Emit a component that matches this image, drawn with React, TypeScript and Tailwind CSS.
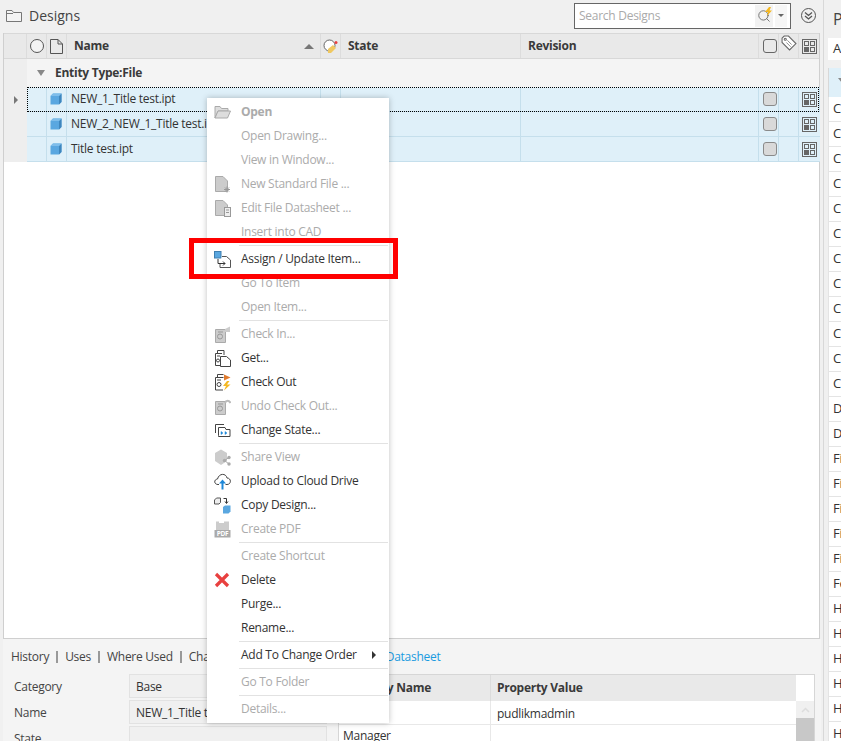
import React from 'react';
import { Search } from 'lucide-react';

const FONT = '"Open Sans", "Noto Sans", sans-serif';
const COLS = 'grid-cols-[23px_20px_20px_254px_20px_180px_238px_20px_20px_21px]';

const Cube = () => (
  <svg width="12" height="12" viewBox="0 0 12 12">
    <path d="M0.5 3 L3 0.5 H11.5 V9 L9 11.5 H0.5 Z" fill="#5aa7e0" />
    <path d="M9 3 L11.5 0.5 V9 L9 11.5 Z" fill="#3f86bd" />
    <path d="M0.5 3 L3 0.5 H11.5 L9 3 Z" fill="#7fbdea" />
  </svg>
);

const GridIcon = () => (
  <svg width="15" height="15" viewBox="0 0 15 15" fill="none">
    <rect x="0.5" y="0.5" width="14" height="14" stroke="#666" />
    <rect x="2.5" y="2.5" width="4" height="4" stroke="#666" />
    <rect x="8.5" y="2.5" width="4" height="4" stroke="#666" />
    <rect x="2" y="8" width="5" height="5" fill="#666" />
    <rect x="8.5" y="8.5" width="4" height="4" stroke="#666" />
  </svg>
);

const doc = 'M1.5 0.5 H9 L13.5 5 V15.5 H1.5 Z';

const icons: Record<string, React.ReactNode> = {
  open: (
    <g>
      <path d="M1 2.5 H6 L7.5 4.5 H14 V7 H4 L1 14 Z" fill="#ddd" stroke="#aaa" />
      <path d="M4 7 H16.5 L13.5 14 H1 Z" fill="#ddd" stroke="#aaa" />
    </g>
  ),
  newFile: (
    <g>
      <path d={doc} fill="#ccc" stroke="#aaa" />
      <path d="M13 10.5 V16.5 M10 13.5 H16 M11 11.5 L15 15.5 M15 11.5 L11 15.5" stroke="#999" />
    </g>
  ),
  edit: (
    <g>
      <path d={doc} fill="#ccc" stroke="#aaa" />
      <rect x="10.5" y="7.5" width="6" height="9" fill="#eee" stroke="#999" />
      <path d="M12 10 H15 M12 12.5 H15" stroke="#999" />
    </g>
  ),
  assign: (
    <g>
      <rect x="0.5" y="0.5" width="6.5" height="6.5" fill="#5aa7e0" stroke="#3f7fb0" />
      <path d="M8 5.5 H12.5 L16.5 9 V16.5 H6 V13" fill="#fff" stroke="#555" />
      <path d="M4 8 V12.5 H11 M9 10.5 L11 12.5 L9 14.5" fill="none" stroke="#333" />
    </g>
  ),
  checkIn: (
    <g>
      <path d="M1.5 3.5 H11.5 V16.5 H1.5 Z" fill="#ccc" stroke="#aaa" />
      <circle cx="6" cy="10.5" r="2.5" fill="none" stroke="#999" />
      <path d="M4 6 H9" stroke="#999" />
      <path d="M11 3 L16 0.5 V6 L11 6 Z" fill="#ccc" />
    </g>
  ),
  get: (
    <g fill="none" stroke="#444">
      <path d="M1.5 3.5 V15.5 H6 M1.5 3.5 H8 M3.5 3.5 V0.5 H10 V5" />
      <circle cx="4" cy="10.5" r="1.5" />
      <path d="M3 6 H6" />
      <path d="M6.5 6.5 H12.5 L16.5 10 V16.5 H6.5 Z" fill="#fff" />
    </g>
  ),
  checkOut: (
    <g>
      <g fill="none" stroke="#444">
        <path d="M1.5 3.5 V16 H9 M1.5 3.5 H9.5 M3.5 3.5 V0.5 H9.5" />
        <circle cx="5" cy="10.5" r="2" />
        <path d="M3 6 H7" />
      </g>
      <path d="M10 0.5 L16.5 3.5 L10 6.5 Z" fill="#e07b2e" />
      <path d="M13 7 L9 12 H12 L10 16.5 L16.5 10.5 H13 L15.5 7 Z" fill="#f5b821" />
    </g>
  ),
  undo: (
    <g>
      <path d="M1.5 3.5 H11.5 V16.5 H1.5 Z" fill="#ccc" stroke="#aaa" />
      <circle cx="6" cy="10.5" r="2.5" fill="none" stroke="#999" />
      <path d="M4 6 H9" stroke="#999" />
      <path d="M11 5 C12 2 15 2 16.5 5" fill="none" stroke="#bbb" strokeWidth="2" />
    </g>
  ),
  change: (
    <g fill="none" stroke="#444">
      <path d="M1.5 11 V2.5 H10" />
      <path d="M4.5 13.5 V5.5 H11 L12 7.5 H16 V14.5 H4.5 Z" />
      <path d="M7 9.5 L9 11 L7 12.5 Z M11 9.5 L13 11 L11 12.5 Z" fill="#1e88d8" stroke="#1e88d8" strokeWidth="0.5" />
    </g>
  ),
  share: (
    <g>
      <path d="M1 4 L7 0.5 L13 4 V12 L7 16 L1 12 Z" fill="#ccc" />
      <circle cx="10.5" cy="11.5" r="1.7" fill="#aaa" />
      <circle cx="15" cy="8.5" r="1.7" fill="#aaa" />
      <circle cx="15" cy="15" r="1.7" fill="#aaa" />
      <path d="M10.5 11.5 L15 8.5 M10.5 11.5 L15 15" stroke="#aaa" />
    </g>
  ),
  cloud: (
    <g>
      <path d="M5 11.5 H4 C0 11.5 -0.5 6.5 3.5 6 C5 0 12 0 13 5 C17.5 5 17.5 11.5 13 11.5 H11.5" fill="none" stroke="#444" />
      <path d="M8.5 16.5 V9" stroke="#1e88d8" strokeWidth="2" />
      <path d="M5 10.5 L8.5 6.5 L12 10.5 Z" fill="#1e88d8" />
    </g>
  ),
  copy: (
    <g>
      <path d="M0.5 3 L2.5 1 H6.5 V5.5 L5 7 H0.5 Z" fill="#eee" stroke="#555" />
      <path d="M9.5 1.5 H12.5 V6 M11 4.5 L12.5 6.5 L14 4.5" fill="none" stroke="#333" />
      <path d="M9 10 L11 8.5 H16.5 V14.5 L14.5 16.5 H9 Z" fill="#5aa7e0" />
    </g>
  ),
  pdf: (
    <g>
      <path d="M2 0.5 H5 V2 H10 V0.5 H15 V9 H2 Z" fill="#ccc" />
      <rect x="0.5" y="9" width="16" height="7.5" fill="#aaa" />
      <text x="8.5" y="15" textAnchor="middle" fontSize="6.5" fontWeight="700" fill="#fff" fontFamily={FONT}>PDF</text>
    </g>
  ),
  del: <path d="M2 2 L14 14 M14 2 L2 14" stroke="#e8403f" strokeWidth="3.2" />,
};

type Entry = { label?: string; icon?: string; on?: boolean; bold?: boolean; sub?: boolean };

const menu: Entry[] = [
  { label: 'Open', icon: 'open', bold: true },
  { label: 'Open Drawing...' },
  { label: 'View in Window...' },
  { label: 'New Standard File ...', icon: 'newFile' },
  { label: 'Edit File Datasheet ...', icon: 'edit' },
  { label: 'Insert into CAD' },
  {},
  { label: 'Assign / Update Item...', icon: 'assign', on: true },
  { label: 'Go To Item' },
  { label: 'Open Item...' },
  {},
  { label: 'Check In...', icon: 'checkIn' },
  { label: 'Get...', icon: 'get', on: true },
  { label: 'Check Out', icon: 'checkOut', on: true },
  { label: 'Undo Check Out...', icon: 'undo' },
  { label: 'Change State...', icon: 'change', on: true },
  {},
  { label: 'Share View', icon: 'share' },
  { label: 'Upload to Cloud Drive', icon: 'cloud', on: true },
  { label: 'Copy Design...', icon: 'copy', on: true },
  { label: 'Create PDF', icon: 'pdf' },
  {},
  { label: 'Create Shortcut' },
  { label: 'Delete', icon: 'del', on: true },
  { label: 'Purge...', on: true },
  { label: 'Rename...', on: true },
  {},
  { label: 'Add To Change Order', on: true, sub: true },
  {},
  { label: 'Go To Folder' },
  {},
  { label: 'Details...' },
];

const rows = ['NEW_1_Title test.ipt', 'NEW_2_NEW_1_Title test.ipt', 'Title test.ipt'];

const side = [
  ...Array(12).fill('C'),
  'D', 'D', 'Fi', 'Fi', 'Fi', 'Fi', 'Fi', 'Fe',
  ...Array(6).fill('H'),
];

const ContextMenu = () => (
  <div className="absolute left-[207px] top-[98px] w-[182px] bg-white py-[2px] shadow-[0_0_6px_rgba(0,0,0,0.25)]">
    {menu.map((m, i) =>
      m.label ? (
        <div
          key={i}
          className={`relative flex h-6 items-center ${m.on ? 'text-[#333]' : 'text-[#ababab]'} ${m.bold ? 'font-bold' : ''}`}
        >
          <span className="flex w-[34px] shrink-0 pl-[7px]">
            {m.icon && (
              <svg width="17" height="17" viewBox="0 0 17 17">
                {icons[m.icon]}
              </svg>
            )}
          </span>
          {m.label}
          {m.sub && <span className="absolute right-[13px] h-0 w-0 border-y-[4px] border-l-[4px] border-y-transparent border-l-[#333]" />}
        </div>
      ) : (
        <div key={i} className="ml-8 mr-px h-[3px] py-px">
          <div className="h-px bg-[#e2e2e2]" />
        </div>
      ),
    )}
  </div>
);

export default function App() {
  return (
    <div className="relative flex h-[741px] w-[841px] overflow-hidden bg-[#f0f0f0] text-xs tracking-[-0.27px] text-[#333]" style={{ fontFamily: FONT }}>
      {/* Designs pane */}
      <div className="flex w-[823px] shrink-0 flex-col pl-[3px]">
        <div className="flex h-[33px] shrink-0 items-center pb-[2px]">
          <svg width="16" height="14" viewBox="0 0 16 14" fill="none" className="ml-[3px]">
            <path d="M0.5 12.5 V1.5 H6 L7.5 3.5 H15.5 V12.5 Z M0.5 4.5 H7" stroke="#777" fill="#f4f4f4" />
          </svg>
          <span className="ml-[7px] text-sm tracking-normal text-[#444]">Designs</span>
          <div className="ml-auto mr-[3px] flex items-center gap-[5px]">
            <div className="flex h-[26px] w-[217px] items-center border border-[#666] bg-white pl-1 pr-[3px]">
              <span className="flex-1 text-[#aaa]">Search Designs</span>
              <span className="relative flex h-[22px] w-[18px] items-center justify-center bg-[#f2f2f2]">
                <Search size={14} strokeWidth={1.5} color="#666" />
                <svg width="9" height="9" viewBox="0 0 9 9" className="absolute right-0 top-[2px]">
                  <path d="M5 0 L1 5 H4 L3 9 L8 3.5 H5.5 L7 0 Z" fill="#f5b821" />
                </svg>
              </span>
              <span className="ml-[2px] flex h-[22px] w-[12px] items-center justify-center bg-[#f6f6f6]">
                <span className="h-0 w-0 border-x-[3px] border-t-[3px] border-x-transparent border-t-[#666]" />
              </span>
            </div>
            <svg width="15" height="15" viewBox="0 0 15 15" fill="none" stroke="#555" className="ml-[5px] mr-[4px]">
              <circle cx="7.5" cy="7.5" r="7" />
              <path d="M4 4.5 L7.5 7.5 L11 4.5 M4 8 L7.5 11 L11 8" strokeWidth="1.3" />
            </svg>
          </div>
        </div>

        <div className="w-[817px] flex-1 border-x border-b border-[#cfcfcf] bg-white">
          {/* header */}
          <div className={`grid h-[26px] ${COLS} border-y border-[#d8d8d8] bg-[#e9e9e9] font-bold text-[#3a3a3a]`}>
            <div className="border-r border-[#dcdcdc]" />
            <div className="flex items-center justify-center border-r border-[#dcdcdc]">
              <span className="h-[14px] w-[14px] rounded-full border border-[#555] bg-[#f4f4f4]" />
            </div>
            <div className="flex items-center justify-center border-r border-[#dcdcdc]">
              <svg width="13" height="15" viewBox="0 0 13 15" fill="none" stroke="#555">
                <path d="M0.5 0.5 H8 L12.5 5 V14.5 H0.5 Z M8 0.5 V5 H12.5" />
              </svg>
            </div>
            <div className="flex items-center justify-between border-r border-[#dcdcdc] pl-[7px] pr-[6px]">
              Name
              <span className="h-0 w-0 border-x-[5px] border-b-[5px] border-x-transparent border-b-[#777]" />
            </div>
            <div className="flex items-center justify-center border-r border-[#dcdcdc]">
              <svg width="15" height="15" viewBox="0 0 15 15" fill="none">
                <circle cx="6.5" cy="6.5" r="5.5" stroke="#666" fill="#fff" />
                <path d="M5 10 L10 6 L13 9 L8 14 L5 14 Z" fill="#f0c860" />
                <circle cx="13" cy="3.5" r="1.5" fill="#e8403f" />
              </svg>
            </div>
            <div className="flex items-center border-r border-[#dcdcdc] pl-[7px]">State</div>
            <div className="flex items-center border-r border-[#dcdcdc] pl-[7px]">Revision</div>
            <div className="flex items-center border-r border-[#dcdcdc] pl-[4px]">
              <span className="h-[14px] w-[14px] rounded-[3px] border border-[#666]" />
            </div>
            <div className="flex items-start justify-center border-r border-[#dcdcdc] pt-px">
              <svg width="16" height="16" viewBox="0 0 15 15" fill="none" stroke="#666">
                <path d="M1 3 L3 1 H7 L14 8 L8 14 L1 7 Z" fill="#fff" />
                <circle cx="4" cy="4" r="1" />
                <path d="M6 5 L10 9 M5 7 L9 11" strokeWidth="0.7" />
              </svg>
            </div>
            <div className="flex items-center pl-[3px]">
              <GridIcon />
            </div>
          </div>
          {/* group row */}
          <div className="flex h-[28px] bg-[#f4f4f4] font-bold text-[#3a3a3a]">
            <div className="w-[23px] shrink-0 bg-[#eeeeee]" />
            <div className="flex items-center">
              <span className="ml-[10px] mr-[10px] h-0 w-0 border-x-[4px] border-t-[6px] border-x-transparent border-t-[#888]" />
              Entity Type:File
            </div>
          </div>
          {/* rows */}
          {rows.map((name, i) => (
            <div key={name} className={`relative grid h-[25px] ${COLS}`}>
              <div className="flex items-center justify-center bg-[#eeeeee]">
                {i === 0 && <span className="h-0 w-0 border-y-[4px] border-l-[4px] border-y-transparent border-l-[#777]" />}
              </div>
              {[0, 1, 2, 3, 4, 5, 6, 7, 8].map((c) => (
                <div key={c} className="flex items-center border-b border-r border-[#c5dfec] bg-[#dff0f9] last:border-r-0">
                  {c === 1 && (
                    <span className="ml-[3px]">
                      <Cube />
                    </span>
                  )}
                  {c === 2 && <span className="pl-[4px]">{name}</span>}
                  {c === 6 && <span className="ml-[4px] h-[14px] w-[14px] rounded-[3px] border border-[#8a8a8a] bg-[#d9d9d9]" />}
                  {c === 8 && (
                    <span className="ml-[3px]">
                      <GridIcon />
                    </span>
                  )}
                </div>
              ))}
              {i === 0 && <div className="pointer-events-none absolute inset-y-0 left-[23px] right-0 border border-dotted border-black" />}
            </div>
          ))}
        </div>

        {/* Detail tabs */}
        <div className="h-[102px] w-[818px] shrink-0 bg-[#f4f4f4]">
          <div className="flex h-[35px] items-center pl-2 text-[#444]">
            <span>History</span>
            <span className="mx-[7px] h-[12px] w-0.5 bg-[#999]" />
            <span>Uses</span>
            <span className="mx-[7px] h-[12px] w-0.5 bg-[#999]" />
            <span>Where Used</span>
            <span className="mx-[7px] h-[12px] w-0.5 bg-[#999]" />
            <span className="w-[197px]">Change Order</span>
            <span className="text-[#1a9be0]">Datasheet</span>
          </div>
          <div className="flex">
            <div className="ml-[10px] flex w-[325px] shrink-0 flex-col gap-[2px]">
              {[['Category', 'Base'], ['Name', 'NEW_1_Title test.ipt'], ['State', '']].map(([k, v]) => (
                <div key={k} className="flex h-6">
                  <span className="w-[116px] shrink-0 self-center pl-[1px] pt-px text-[#444]">{k}</span>
                  <span className="flex w-[198px] items-center border border-[#e2e2e2] bg-[#f0f0f0] pl-[6px] pt-px">{v}</span>
                </div>
              ))}
            </div>
            <div className="w-[477px] border border-[#d6d6d6] bg-white">
              <div className="flex">
                <div className="flex-1">
                  <div className="flex h-[26px] items-center bg-[#e9e9e9] font-bold text-[#3a3a3a]">
                    <span className="w-[152px] border-r border-[#dcdcdc] pl-1 leading-[26px]">Property Name</span>
                    <span className="pl-[6px]">Property Value</span>
                  </div>
                  <div className="flex h-6 border-b border-[#e8e8e8]">
                    <span className="w-[152px] border-r border-[#e8e8e8]" />
                    <span className="flex items-center pl-[6px] pt-[2px]">pudlikmadmin</span>
                  </div>
                  <div className="flex h-6 border-b border-[#e8e8e8]">
                    <span className="flex w-[152px] items-center border-r border-[#e8e8e8] pb-[2px] pl-1">Manager</span>
                  </div>
                </div>
                <div className="flex w-[18px] flex-col">
                  <div className="h-[26px] bg-white" />
                  <div className="flex h-[17px] items-center justify-center bg-[#f0f0f0]">
                    <svg width="9" height="6" viewBox="0 0 9 6" fill="none" stroke="#ddd" strokeWidth="1.5">
                      <path d="M1 5 L4.5 1.5 L8 5" />
                    </svg>
                  </div>
                  <div className="flex-1 bg-[#c8c8c8]" />
                </div>
              </div>
            </div>
          </div>
        </div>
      </div>

      {/* Right pane, clipped by the window */}
      <div className="min-w-0 flex-1 border-l border-[#d8d8d8] pl-[4px]">
        <div className="flex h-[37px] items-center pl-[5px] text-base text-[#444]">P</div>
        <div className="mt-px flex h-[22px] items-center bg-white pl-[5px] text-[13px]">A</div>
        <div className="mt-[8px] h-[29px] border-l border-[#d8d8d8] bg-[#dff0f9] pl-[9px] pt-[10px]">
          <span className="block h-0 w-0 border-x-[4px] border-t-[5px] border-x-transparent border-t-[#888]" />
        </div>
        {side.map((t, i) => (
          <div key={i} className="flex h-[25px] items-center border-b border-l border-[#e4e4e4] bg-white pl-[4px] text-[13px]">
            {t}
          </div>
        ))}
      </div>

      <ContextMenu />
      {/* red annotation box */}
      <div className="absolute left-[189px] top-[238px] h-[41px] w-[209px] border-[5px] border-[#ff0000]" />
    </div>
  );
}
